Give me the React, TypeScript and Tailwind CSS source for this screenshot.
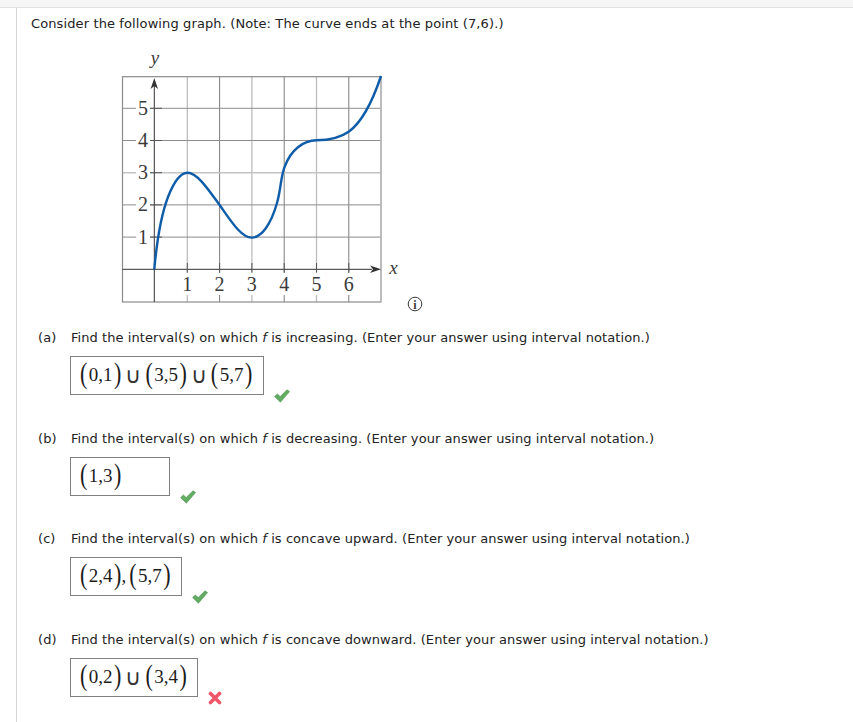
const parts = [
  { label: '(a)', kind: 'increasing', answer: [['0,1'], ['3,5'], ['5,7']], joiner: 'union', width: 'w-[194px]', ok: true, gap: 'mt-[10px]' },
  { label: '(b)', kind: 'decreasing', answer: [['1,3']], joiner: 'union', width: 'w-[100px]', ok: true, gap: 'mt-[36px]' },
  { label: '(c)', kind: 'concave upward', answer: [['2,4'], ['5,7']], joiner: 'comma', width: 'w-[112px]', ok: true, gap: 'mt-[35px]' },
  { label: '(d)', kind: 'concave downward', answer: [['0,2'], ['3,4']], joiner: 'union', width: 'w-[128px]', ok: false, gap: 'mt-[36px]' },
]

const CheckMark = () => (
  <svg width="16" height="14" viewBox="0 0 16 14" className="shrink-0">
    <path d="M0.6 7.6 L3.4 5 L6.2 7.6 L13 0.8 L15.6 2.6 L6.4 13.2 Z" fill="#62ad62" stroke="#4f9655" strokeWidth="0.6" />
  </svg>
)

const CrossMark = () => (
  <svg width="14" height="14" viewBox="0 0 14 14" className="shrink-0">
    <path d="M2.5 2.5 L11.5 11.5 M11.5 2.5 L2.5 11.5" stroke="#f0566a" strokeWidth="3.6" strokeLinecap="round" />
  </svg>
)

const Interval = ({ value }: { value: string }) => (
  <span className="inline-flex items-center">
    <span className="text-[22px] leading-none mt-[-3px] scale-y-[1.3]">(</span>
    <span className="mx-[1.5px] text-[19px]">{value}</span>
    <span className="text-[22px] leading-none mt-[-3px] scale-y-[1.3]">)</span>
  </span>
)

const Answer = ({ items, joiner }: { items: string[][]; joiner: string }) => (
  <span className="inline-flex items-center">
    {items.map((item, i) => (
      <span key={item[0]} className="inline-flex items-center">
        {i > 0 && joiner === 'union' && (
          <span className="mx-[4px] font-['DejaVu_Sans',sans-serif] font-extralight text-[22px] leading-none text-[#333]">∪</span>
        )}
        {i > 0 && joiner === 'comma' && <span className="mr-[3px] text-[19px]">,</span>}
        <Interval value={item[0]} />
      </span>
    ))}
  </span>
)

const xs = [187.3, 219.6, 251.9, 284.2, 316.5, 348.8]
const ys = [108.3, 140.5, 172.7, 204.9, 237.1]
const yLabels = ['5', '4', '3', '2', '1']

const Graph = () => (
  <svg width="330" height="280" viewBox="100 40 330 280" className="block" fontFamily="'Liberation Serif', serif">
    {xs.map((x, i) => (
      <line key={x} x1={x} x2={x} y1="76.7" y2="302" stroke={i % 2 === 0 ? '#bdbdbd' : '#7d7d7d'} strokeWidth={i % 2 === 0 ? 1.3 : 1} />
    ))}
    {ys.map((y, i) => (
      <line key={y} x1="122.5" x2="381" y1={y} y2={y} stroke={i === 2 ? '#c4c4c4' : '#8c8c8c'} strokeWidth={i === 2 ? 1.4 : 1} />
    ))}
    <rect x="122.5" y="76.7" width="258.5" height="225.3" fill="none" stroke="#8a8a8a" strokeWidth="1.2" />
    <line x1="381" x2="381" y1="76.7" y2="302" stroke="#bdbdbd" strokeWidth="1.6" />

    {/* white patches behind the axis numbers */}
    {xs.map(x => (
      <rect key={x} x={x - 8} y="273" width="16" height="22" fill="white" />
    ))}
    {ys.map(y => (
      <rect key={y} x="136" y={y - 9} width="14" height="18" fill="white" />
    ))}

    <line x1="122.5" x2="372" y1="269.3" y2="269.3" stroke="#333" strokeWidth="1" />
    <line x1="154.3" x2="154.3" y1="302" y2="84" stroke="#333" strokeWidth="1" />
    <path d="M381 269.3 L370 265.6 L373 269.3 L370 273 Z" fill="#333" />
    <path d="M154.3 78 L150.6 89 L154.3 86 L158 89 Z" fill="#333" />
    {xs.map(x => (
      <line key={x} x1={x} x2={x} y1="263" y2="272.5" stroke="#555" strokeWidth="1" />
    ))}
    {ys.map(y => (
      <line key={y} x1="150" x2="162" y1={y} y2={y} stroke="#555" strokeWidth="1" />
    ))}

    {yLabels.map((t, i) => (
      <text key={t} x="143" y={ys[i] + 6.5} fontSize="20" fill="#3a3a3a" textAnchor="middle">{t}</text>
    ))}
    {xs.map((x, i) => (
      <text key={x} x={x} y="291" fontSize="20" fill="#3a3a3a" textAnchor="middle">{i + 1}</text>
    ))}
    <text x="155" y="64" fontSize="19" fontStyle="italic" fill="#3a3a3a" textAnchor="middle">y</text>
    <text x="393.5" y="274" fontSize="19" fontStyle="italic" fill="#3a3a3a" textAnchor="middle">x</text>

    <path
      d="M154.3 269.3 C156.5 245 160 218 168 197 C173 184 179 173 187.3 172.7 C197 172.5 208 189 219.6 205 C230 219.5 241 238 252 237.6 C262 237 271 224 277 203 C281 189 281 174 285 166 C291 150 303 140.5 316.5 140.3 C328 140.2 340 138 349 131.5 C362 122 372 103 381 76"
      fill="none"
      stroke="#0f5ca8"
      strokeWidth="2.4"
    />

    <circle cx="415" cy="304" r="6.8" fill="none" stroke="#3a3a3a" strokeWidth="1" />
    <text x="415" y="308.5" fontSize="12" fontWeight="700" fill="#3a3a3a" textAnchor="middle">i</text>
  </svg>
)

const App = () => {
  return (
    <div className="h-[722px] overflow-hidden bg-white font-['DejaVu_Sans',Verdana,sans-serif] text-[13px] tracking-[0.07px] text-[#222]">
      <div className="h-2 bg-[#f6f6f6] border-b border-[#e2e2e2]" />
      <div className="ml-4 h-[714px] border-l border-[#d4d4d4] pl-[14px]">
        <p className="pt-[8px] leading-4 tracking-[0.115px]">Consider the following graph. (Note: The curve ends at the point (7,6).)</p>
        <div className="ml-[69px] mt-[8px]">
          <Graph />
        </div>
        {parts.map(part => (
          <div key={part.label} className={part.gap}>
            <div className="flex leading-4 pl-[7px]">
              <span className="w-[33px] shrink-0">{part.label}</span>
              <span>
                Find the interval(s) on which <i>f</i> is {part.kind}. (Enter your answer using interval notation.)
              </span>
            </div>
            <div className="mt-[10px] ml-[39px] flex items-end gap-[10px]">
              <div className={`${part.width} h-[39px] border border-[#808080] pl-[9px] flex items-center font-['Liberation_Serif',serif] tracking-normal text-[#1c1c1c] whitespace-nowrap`}>
                <Answer items={part.answer} joiner={part.joiner} />
              </div>
              <div className="mb-[-8px]">{part.ok ? <CheckMark /> : <CrossMark />}</div>
            </div>
          </div>
        ))}
      </div>
    </div>
  )
}

export default App
